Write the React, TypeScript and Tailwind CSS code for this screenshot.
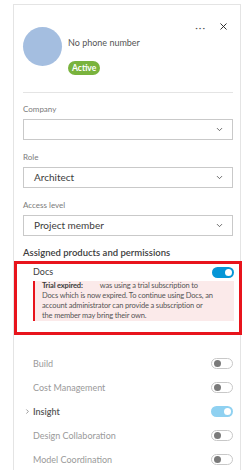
import { ChevronDown, ChevronRight, X } from "lucide-react";

const font = { fontFamily: "Lato, 'Liberation Sans', sans-serif" };

function Toggle({ state }: { state: "on" | "off" | "soft" }) {
  if (state === "off") {
    return (
      <div className="w-[22px] h-[11px] rounded-full border border-[#c8c8c8] bg-white flex items-center pl-[2px] box-border">
        <div className="w-[7px] h-[7px] rounded-full bg-[#7a7a7a]" />
      </div>
    );
  }
  return (
    <div
      className={`w-[22px] h-[11px] rounded-full flex items-center justify-end pr-[2px] ${
        state === "on" ? "bg-[#0696d7]" : "bg-[#8fd1f1]"
      }`}
    >
      <div className="w-[7px] h-[7px] rounded-full bg-white" />
    </div>
  );
}

function Field({ label, value }: { label: string; value?: string }) {
  return (
    <div>
      <div className="text-[8px] leading-[10px] text-[#7a7a7a] mb-[5px]">{label}</div>
      <div className="h-[21px] border border-[#c9c9c9] flex items-center justify-between pl-[10px] pr-[8px]">
        <span className="text-[10px] text-[#3c3c3c]">{value}</span>
        <ChevronDown className="w-[9px] h-[9px] text-[#3c3c3c]" strokeWidth={2} />
      </div>
    </div>
  );
}

const products = [
  { name: "Build", state: "off" as const },
  { name: "Cost Management", state: "off" as const },
  { name: "Insight", state: "soft" as const, expand: true },
  { name: "Design Collaboration", state: "off" as const },
  { name: "Model Coordination", state: "off" as const },
];

export default function App() {
  return (
    <div className="w-[242px] h-[470px] bg-white overflow-hidden pt-[4px] pl-[13px]" style={font}>
      <div className="w-[228px] h-full border-l border-t border-r border-[#e4e4e4] pl-[9px] pr-[7px]">
        {/* header */}
        <div className="relative pt-[22px] pb-[15px] border-b border-[#e4e4e4]">
          <div className="flex items-start gap-[6px]">
            <div className="w-[39px] h-[39px] rounded-full bg-[#a4bee0]" />
            <div className="pt-[10px]">
              <div className="text-[9px] leading-[12px] text-[#555]">No phone number</div>
              <div className="mt-[12px] inline-flex items-center h-[14px] px-[4px] rounded-full bg-[#79b33d] text-white text-[8.5px] font-bold">
                Active
              </div>
            </div>
          </div>
          <div className="absolute top-[16px] right-[4px] flex items-center gap-[12px]">
            <span className="text-[10px] text-[#555] tracking-[1px] leading-none">···</span>
            <X className="w-[11px] h-[11px] text-[#222]" strokeWidth={2} />
          </div>
        </div>

        <div className="pt-[11px] flex flex-col gap-[12px]">
          <Field label="Company" />
          <Field label="Role" value="Architect" />
          <Field label="Access level" value="Project member" />
        </div>

        <div className="mt-[10px] text-[9.5px] leading-[13px] font-semibold text-[#3c3c3c]">
          Assigned products and permissions
        </div>

        {/* highlighted Docs block */}
        <div className="mt-[2px] ml-[-9px] mr-[-9px] border-[3px] border-[#e8141c] pl-[16px] pr-[5px] pt-[2px] pb-[11px] bg-white relative">
          <div className="flex items-center justify-between h-[13px]">
            <span className="text-[9px] text-[#3c3c3c]">Docs</span>
            <Toggle state="on" />
          </div>
          <div className="mt-[2px] border-l-2 border-[#e8141c] bg-[#fbeaea] pl-[7px] pr-[4px]">
            <p className="text-[7.5px] leading-[10px] tracking-[-0.15px] text-[#555] whitespace-nowrap">
              <span className="font-bold text-[#3c3c3c] mr-[17px]">Trial expired:</span>
              was using a trial subscription to
              <br />
              Docs which is now expired. To continue using Docs, an
              <br />
              account administrator can provide a subscription or
              <br />
              the member may bring their own.
            </p>
          </div>
        </div>

        <div className="pt-[17px]">
          {products.map((p) => (
            <div key={p.name} className="h-[24px] flex items-center justify-between pl-[10px] relative">
              {p.expand && (
                <ChevronRight className="absolute left-[1px] w-[7px] h-[7px] text-[#555]" strokeWidth={2} />
              )}
              <span
                className={`text-[9px] ${p.expand ? "text-[#555] font-semibold" : "text-[#9a9a9a]"}`}
              >
                {p.name}
              </span>
              <Toggle state={p.state} />
            </div>
          ))}
        </div>
      </div>
    </div>
  );
}
